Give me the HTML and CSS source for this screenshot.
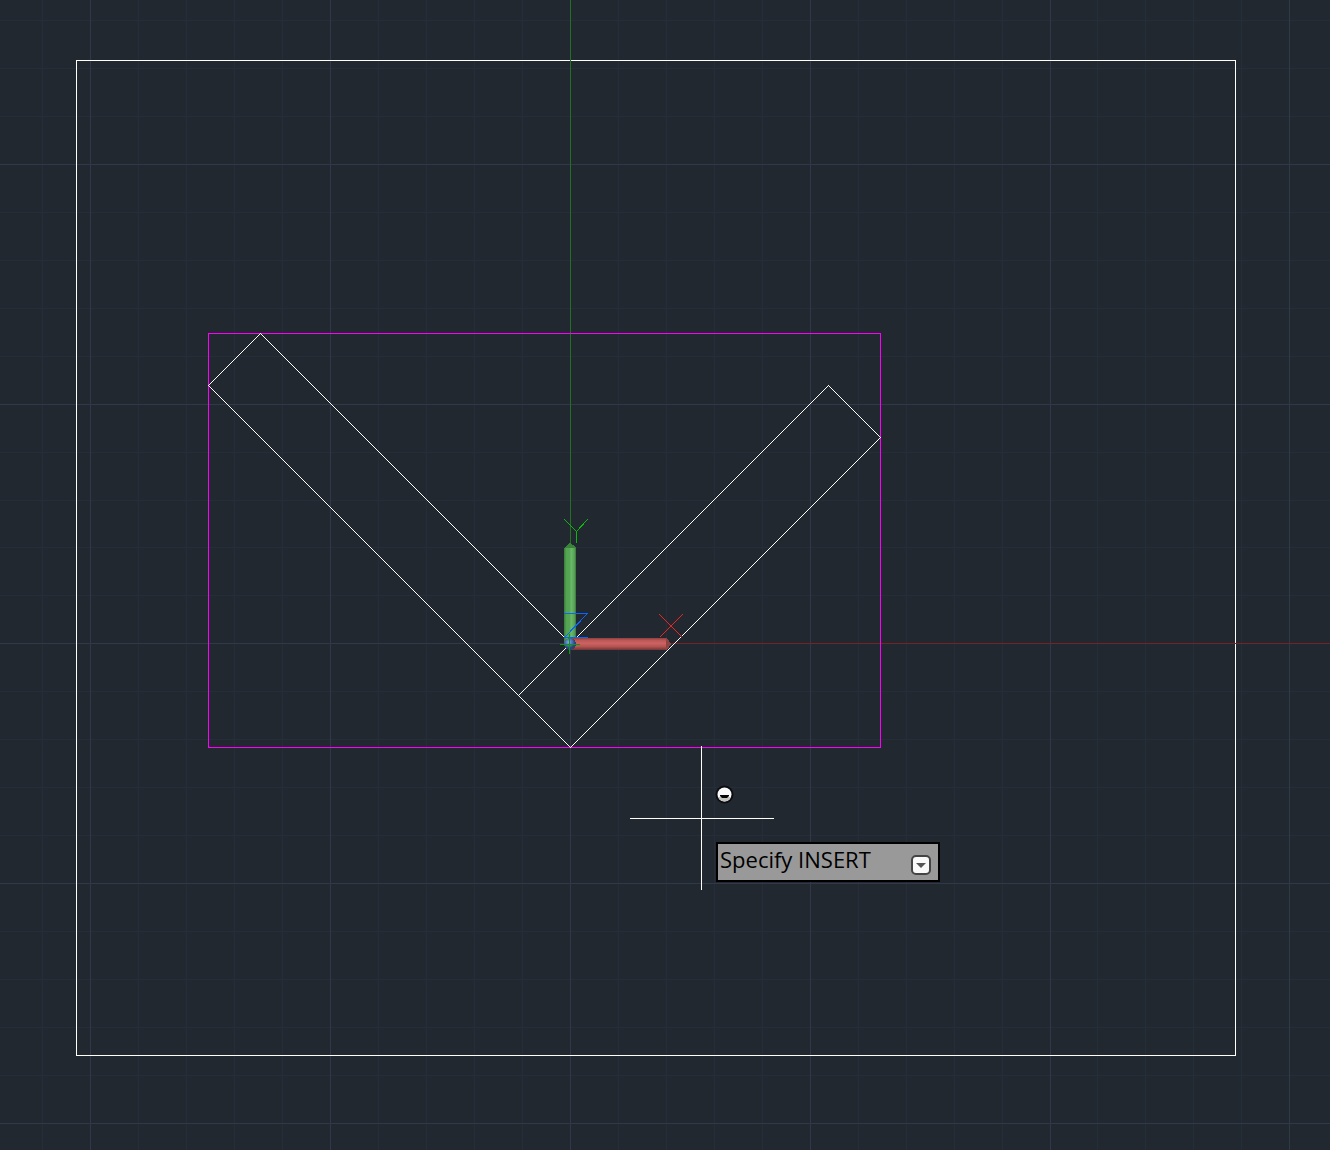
FILE: index.html
```
<!DOCTYPE html>
<html lang="en">
<head>
<meta charset="UTF-8">
<meta name="viewport" content="width=device-width, initial-scale=1.0">
<title>Drawing</title>
<link rel="stylesheet" href="styles.css">
</head>
<body>
<main class="viewport">
    <svg class="drawing" aria-hidden="true">
        <defs>
            <linearGradient id="green-bar">
                <stop offset="0" stop-color="#387c3a"/>
                <stop offset="0.2" stop-color="#55a453"/>
                <stop offset="0.45" stop-color="#56a554"/>
                <stop offset="0.6" stop-color="#6ab968"/>
                <stop offset="0.85" stop-color="#5aa358"/>
                <stop offset="1" stop-color="#39743a"/>
            </linearGradient>
            <linearGradient id="red-bar" x2="0" y2="1">
                <stop offset="0" stop-color="#8e3f40"/>
                <stop offset="0.2" stop-color="#bd5857"/>
                <stop offset="0.45" stop-color="#cb6361"/>
                <stop offset="0.7" stop-color="#b65554"/>
                <stop offset="1" stop-color="#713536"/>
            </linearGradient>
            <radialGradient id="blue-ball" cx="0.4" cy="0.35">
                <stop offset="0" stop-color="#86a9e0"/>
                <stop offset="0.5" stop-color="#4f78bd"/>
                <stop offset="1" stop-color="#2b4478"/>
            </radialGradient>
        </defs>

        <g id="grid"></g>
        <rect class="frame" x="76.5" y="60.5" width="1159" height="995"/>

        <!-- axes -->
        <path class="axis-y" d="M570.5 0V643"/>
        <path class="axis-x" d="M570 643.5H4000"/>

        <!-- block and its extents -->
        <rect class="extents" x="208.5" y="333.5" width="672" height="414"/>
        <path class="block" d="M570.5 643.5L260.5 333.5L208.5 385.5L570.5 747.5L880.5 437.5L828.5 385.5L518.5 695.5"/>

        <!-- ucs icon -->
        <rect x="564" y="548" width="12" height="95" fill="url(#green-bar)"/>
        <path d="M564 548L567 545L570 543L573 545L576 548Z" fill="#3a843a"/>
        <rect x="570" y="638" width="96" height="12" fill="url(#red-bar)"/>
        <path d="M666 638L669 641L671 644L669 647L666 650Z" fill="#8f4444"/>
        <circle cx="570" cy="644" r="6" fill="url(#blue-ball)"/>
        <path class="ucs-y" d="M564.5 519.5L576.5 531.5L587.5 519.5M576.5 531V543"/>
        <path class="ucs-x" d="M659.5 614.5L682.5 637.5M682.5 614.5L659.5 637.5"/>
        <path class="ucs-z" d="M564 613.5H587.5L564.5 637.5H588"/>
        <path class="origin" d="M560 644.5H580M569.5 634V654"/>

        <!-- crosshair -->
        <path class="crosshair" d="M630 818.5H774M701.5 746V890"/>

        <!-- cursor badge -->
        <g class="badge">
            <circle cx="724.5" cy="794.5" r="9" fill="#0b0d10"/>
            <circle cx="724.5" cy="794.5" r="7" fill="#fafafa"/>
            <path d="M718 797H731A7 7 0 0 1 718 797Z" fill="#c4c4bf"/>
            <path d="M720 795H729V796L727 798H722L720 796Z" fill="#050505"/>
        </g>
    </svg>

    <div class="prompt">
        <span id="prompt-text">Specify INSERT</span>
        <button type="button" class="prompt-btn" aria-labelledby="prompt-text">
            <svg viewBox="0 0 10 5" width="10" height="5"><path d="M0 0H10L5 5Z" fill="#555"/></svg>
        </button>
    </div>
</main>

<script>
    const origin = { x: 569.9, y: 643.4 };
    const step = 47.96;
    const grid = document.getElementById("grid");

    function addLine(d, isMajor) {
        const line = document.createElementNS("http://www.w3.org/2000/svg", "path");
        line.setAttribute("d", d);
        line.setAttribute("class", isMajor ? "grid-major" : "grid-minor");
        grid.appendChild(line);
    }

    function drawGrid() {
        grid.textContent = "";
        // minor lines first so that the major ones stay on top
        for (const isMajor of [false, true]) {
            for (let i = -Math.floor(origin.x / step); origin.x + i * step < window.innerWidth; i++) {
                const x = Math.round(origin.x + i * step) + 0.5;
                if ((i % 5 === 0) === isMajor) addLine("M" + x + " 0V" + window.innerHeight, isMajor);
            }
            for (let i = -Math.floor(origin.y / step); origin.y + i * step < window.innerHeight; i++) {
                const y = Math.round(origin.y + i * step) + 0.5;
                if ((i % 5 === 0) === isMajor) addLine("M0 " + y + "H" + window.innerWidth, isMajor);
            }
        }
    }

    drawGrid();
    window.addEventListener("resize", drawGrid);
</script>
</body>
</html>
```

FILE: styles.css
```
body {
    margin: 0;
    background-color: #212830;
    font-family: "Open Sans", "Noto Sans", sans-serif;
}
.viewport {
    position: relative;
    height: 100vh;
    overflow: hidden;
}
.drawing {
    display: block;
    width: 100%;
    height: 100%;
    fill: none;
    shape-rendering: crispEdges;
}
.badge {
    shape-rendering: auto;
}
.grid-minor {
    stroke: #262d3a;
}
.grid-major {
    stroke: #30384a;
}
.frame, .block, .crosshair {
    stroke: #fff;
}
.extents {
    stroke: #f0f;
}
.axis-y {
    stroke: #227122;
}
.axis-x {
    stroke: #732329;
}
.ucs-y {
    stroke: #0fb40f;
}
.ucs-x {
    stroke: #f02323;
}
.ucs-z {
    stroke: #0a64ff;
}
.origin {
    stroke: #0a9b0a;
}
.prompt {
    position: absolute;
    left: 716px;
    top: 842px;
    display: flex;
    justify-content: space-between;
    width: 224px;
    height: 40px;
    padding: 0 7px 0 2px;
    border: 2px solid #000;
    box-sizing: border-box;
    background-color: #999;
    color: #000;
    font-size: 22px;
    font-weight: 500;
    line-height: 30px;
    white-space: nowrap;
}
.prompt-btn {
    display: flex;
    justify-content: center;
    align-items: center;
    width: 20px;
    height: 20px;
    margin-top: 11px;
    padding: 0;
    border: 2px solid #444;
    border-radius: 5px;
    background-color: #fafafa;
    cursor: pointer;
}
```
